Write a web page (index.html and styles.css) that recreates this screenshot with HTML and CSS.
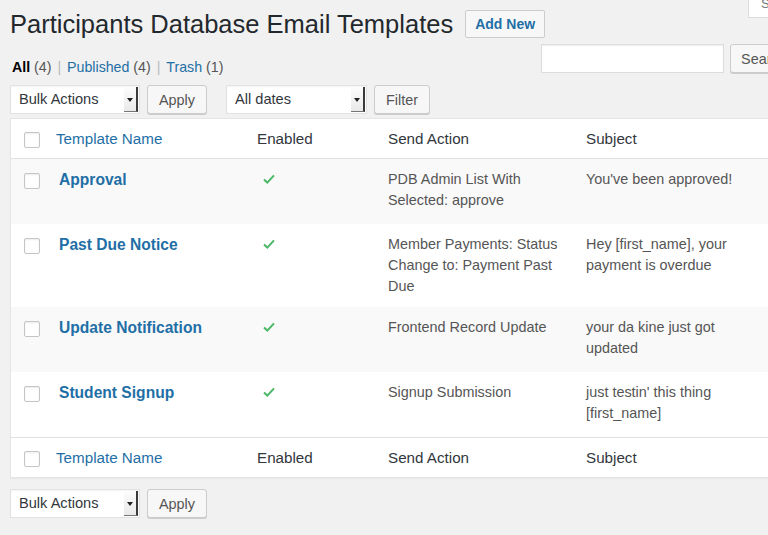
FILE: index.html
```html
<!DOCTYPE html>
<html lang="en">
  <head>
    <meta charset="UTF-8" />
    <meta name="viewport" content="width=device-width, initial-scale=1.0" />
    <title>Participants Database Email Templates</title>
    <link rel="stylesheet" href="styles.css">
  </head>
  <body>
    <div class="screen-tab">Screen Options</div>
    <div class="wrap">
      <div class="page-head">
        <h1>Participants Database Email Templates</h1>
        <a class="page-title-action" href="#">Add New</a>
      </div>

      <div class="list-top">
        <ul class="subsubsub">
          <li><b>All</b> <span class="count">(4)</span> <span class="sep">|</span></li>
          <li><a href="#">Published</a> <span class="count">(4)</span> <span class="sep">|</span></li>
          <li><a href="#">Trash</a> <span class="count">(1)</span></li>
        </ul>
        <div class="search-box">
          <input type="search" class="search-input">
          <button class="button search-btn">Search Templates</button>
        </div>
      </div>

      <div class="tablenav">
        <div class="fake-select bulk"><span>Bulk Actions</span><i class="select-arrow"></i></div>
        <button class="button">Apply</button>
        <div class="fake-select dates"><span>All dates</span><i class="select-arrow"></i></div>
        <button class="button">Filter</button>
      </div>

      <table class="list-table">
        <colgroup>
          <col class="col-cb">
          <col class="col-title">
          <col class="col-enabled">
          <col class="col-action">
          <col class="col-subject">
        </colgroup>
        <thead>
          <tr>
            <th class="check-column"><span class="cb"></span></th>
            <th><a href="#">Template Name</a></th>
            <th>Enabled</th>
            <th>Send Action</th>
            <th>Subject</th>
          </tr>
        </thead>
        <tbody>
          <tr class="alt">
            <td class="check-column"><span class="cb"></span></td>
            <td class="title"><strong><a href="#">Approval</a></strong><div class="row-actions"></div></td>
            <td class="enabled"><svg class="check" viewBox="0 0 12 10" width="12" height="10"><path d="M1 5.5 L4.3 8.6 L11 1.4" fill="none" stroke="#4ab866" stroke-width="2"/></svg></td>
            <td>PDB Admin List With Selected: approve</td>
            <td>You've been approved!</td>
          </tr>
          <tr>
            <td class="check-column"><span class="cb"></span></td>
            <td class="title"><strong><a href="#">Past Due Notice</a></strong><div class="row-actions"></div></td>
            <td class="enabled"><svg class="check" viewBox="0 0 12 10" width="12" height="10"><path d="M1 5.5 L4.3 8.6 L11 1.4" fill="none" stroke="#4ab866" stroke-width="2"/></svg></td>
            <td>Member Payments: Status Change to: Payment Past Due</td>
            <td>Hey [first_name], your payment is overdue</td>
          </tr>
          <tr class="alt">
            <td class="check-column"><span class="cb"></span></td>
            <td class="title"><strong><a href="#">Update Notification</a></strong><div class="row-actions"></div></td>
            <td class="enabled"><svg class="check" viewBox="0 0 12 10" width="12" height="10"><path d="M1 5.5 L4.3 8.6 L11 1.4" fill="none" stroke="#4ab866" stroke-width="2"/></svg></td>
            <td>Frontend Record Update</td>
            <td>your da kine just got updated</td>
          </tr>
          <tr>
            <td class="check-column"><span class="cb"></span></td>
            <td class="title"><strong><a href="#">Student Signup</a></strong><div class="row-actions"></div></td>
            <td class="enabled"><svg class="check" viewBox="0 0 12 10" width="12" height="10"><path d="M1 5.5 L4.3 8.6 L11 1.4" fill="none" stroke="#4ab866" stroke-width="2"/></svg></td>
            <td>Signup Submission</td>
            <td>just testin' this thing [first_name]</td>
          </tr>
        </tbody>
        <tfoot>
          <tr>
            <th class="check-column"><span class="cb"></span></th>
            <th><a href="#">Template Name</a></th>
            <th>Enabled</th>
            <th>Send Action</th>
            <th>Subject</th>
          </tr>
        </tfoot>
      </table>

      <div class="tablenav bottom">
        <div class="fake-select bulk"><span>Bulk Actions</span><i class="select-arrow"></i></div>
        <button class="button">Apply</button>
      </div>
    </div>
  </body>
</html>
```

FILE: styles.css
```css
html,
body {
  overflow: hidden;
}
body {
  margin: 0;
  background-color: #f1f1f1;
  font-family: "Liberation Sans", Arial, sans-serif;
  color: #444;
  position: relative;
  height: 535px;
}
a {
  color: #1f6fa6;
  text-decoration: none;
}
.screen-tab {
  position: absolute;
  top: -9px;
  left: 748px;
  padding: 4px 12px;
  line-height: 18px;
  font-size: 13px;
  color: #72777c;
  background-color: #fff;
  border: 1px solid #ddd;
  border-top: none;
  white-space: nowrap;
}
.wrap {
  width: 857px;
  margin-left: 10px;
}
.page-head {
  display: flex;
  align-items: center;
  gap: 12px;
  padding-top: 10px;
}
.page-head h1 {
  margin: 0;
  font-size: 25.5px;
  font-weight: normal;
  line-height: 28px;
  color: #23282d;
}
.page-title-action {
  display: block;
  height: 28px;
  box-sizing: border-box;
  padding: 0 9px;
  line-height: 26px;
  font-size: 14px;
  font-weight: bold;
  color: #1f6fa6;
  background-color: #f7f7f7;
  border: 1px solid #ccc;
  border-radius: 2px;
}
.list-top {
  display: flex;
  align-items: flex-start;
  height: 29px;
  margin-top: 6px;
}
.subsubsub {
  display: flex;
  gap: 4px;
  list-style: none;
  margin: 13px 0 0 2px;
  padding: 0;
  font-size: 14.2px;
  line-height: 20px;
  color: #555;
}
.subsubsub b {
  color: #000;
}
.subsubsub .sep {
  color: #bbb;
  padding: 0 2px;
}
.search-box {
  display: flex;
  gap: 6px;
  margin-left: auto;
}
.search-input {
  width: 183px;
  height: 29px;
  box-sizing: border-box;
  margin: 0;
  border: 1px solid #ddd;
  background-color: #fff;
  box-shadow: inset 0 1px 2px rgba(0, 0, 0, 0.07);
}
.button {
  height: 29px;
  box-sizing: border-box;
  margin: 0;
  padding: 0 11px;
  font-family: inherit;
  font-size: 14.4px;
  color: #555;
  background-color: #f7f7f7;
  border: 1px solid #ccc;
  border-radius: 3px;
  box-shadow: 0 1px 0 #ccc;
}
.search-btn {
  padding: 0 10px;
}
.tablenav {
  display: flex;
  align-items: center;
  height: 29px;
  margin-top: 12px;
}
.tablenav .button {
  margin-left: 7px;
}
.tablenav .dates {
  margin-left: 19px;
}
.tablenav.bottom {
  margin-top: 11px;
}
.fake-select {
  display: flex;
  align-items: stretch;
  height: 29px;
  box-sizing: border-box;
  padding: 1px 1px 1px 8px;
  font-size: 14.6px;
  color: #32373c;
  background-color: #fff;
  border: 1px solid #e2e2e2;
  box-shadow: inset 0 1px 2px rgba(0, 0, 0, 0.05);
}
.fake-select span {
  flex: 1;
  line-height: 25px;
}
.fake-select.bulk {
  width: 130px;
}
.fake-select.dates {
  width: 141px;
}
.select-arrow {
  position: relative;
  width: 12px;
  background: linear-gradient(#fdfdfd, #e9e9e9);
  border-right: 2px solid #3a3a3a;
  border-bottom: 1px solid #777;
}
.select-arrow::after {
  content: "";
  position: absolute;
  left: 3px;
  top: 11px;
  border-left: 3px solid transparent;
  border-right: 3px solid transparent;
  border-top: 4px solid #222;
}
.list-table {
  width: 766px;
  margin-top: 4px;
  table-layout: fixed;
  border-collapse: separate;
  border-spacing: 0;
  background-color: #fff;
  border: 1px solid #e5e5e5;
  box-shadow: 0 1px 1px rgba(0, 0, 0, 0.04);
}
.col-cb {
  width: 35px;
}
.col-title {
  width: 201px;
}
.col-enabled {
  width: 131px;
}
.col-action {
  width: 198px;
}
.col-subject {
  width: 199px;
}
.list-table th {
  padding: 10px;
  font-size: 15.2px;
  font-weight: normal;
  line-height: 19px;
  text-align: left;
  color: #32373c;
}
.list-table thead th {
  border-bottom: 1px solid #e1e1e1;
}
.list-table tfoot th {
  border-top: 1px solid #e1e1e1;
}
.list-table td {
  padding: 10px;
  vertical-align: top;
  font-size: 14.4px;
  line-height: 21px;
  color: #555;
}
.list-table tr.alt td {
  background-color: #f9f9f9;
}
.list-table .check-column {
  padding: 10px 0 0 13px;
  vertical-align: top;
}
.cb {
  display: inline-block;
  width: 16px;
  height: 16px;
  box-sizing: border-box;
  vertical-align: middle;
  border: 1px solid #c3c6c9;
  border-radius: 2px;
  background-color: #fff;
  box-shadow: inset 0 1px 2px rgba(0, 0, 0, 0.08);
}
.list-table td.check-column .cb {
  margin-top: 2px;
}
.list-table td.title {
  padding-left: 13px;
}
.title strong {
  display: block;
  font-size: 15.6px;
  line-height: 21px;
}
.row-actions {
  height: 24px;
}
.enabled .check {
  margin: 5px 0 0 6px;
  display: block;
}
```
